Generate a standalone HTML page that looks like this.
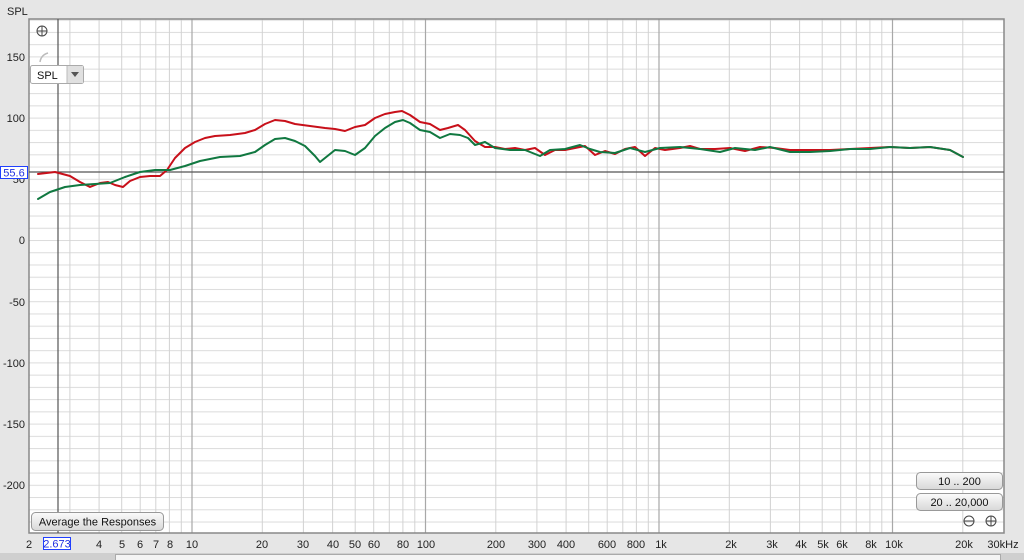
<!DOCTYPE html>
<html><head><meta charset="utf-8"><style>
html,body{margin:0;padding:0;width:1024px;height:560px;overflow:hidden;background:#e6e6e6;font-family:"Liberation Sans",sans-serif;}
svg{position:absolute;left:0;top:0}
</style></head><body>
<svg width="1024" height="560" xmlns="http://www.w3.org/2000/svg" font-family="Liberation Sans, sans-serif">
<defs>
<pattern id="hp" x="0" y="240" width="10" height="12.24" patternUnits="userSpaceOnUse">
<rect width="10" height="12.24" fill="#fff"/><rect y="0" width="10" height="1" fill="#dcdcdc"/>
</pattern>
<linearGradient id="bg" x1="0" y1="0" x2="0" y2="1"><stop offset="0" stop-color="#fbfbfb"/><stop offset="1" stop-color="#d8d8d8"/></linearGradient>
</defs>
<rect x="29" y="19" width="975" height="514" fill="url(#hp)"/>
<path d="M69.9 19V533M99.1 19V533M121.7 19V533M140.2 19V533M155.8 19V533M169.4 19V533M181.3 19V533M262.3 19V533M303.4 19V533M332.6 19V533M355.2 19V533M373.7 19V533M389.3 19V533M402.9 19V533M414.8 19V533M495.8 19V533M536.9 19V533M566.1 19V533M588.7 19V533M607.2 19V533M622.8 19V533M636.4 19V533M648.3 19V533M729.3 19V533M770.4 19V533M799.6 19V533M822.2 19V533M840.7 19V533M856.3 19V533M869.9 19V533M881.8 19V533M962.8 19V533" stroke="#d2d2d2" stroke-width="1"/>
<path d="M192 19V533M425.5 19V533M659 19V533M892.5 19V533" stroke="#a8a8a8" stroke-width="1.2"/>
<rect x="29" y="19" width="975" height="514" fill="none" stroke="#888" stroke-width="1.5"/>
<line x1="58" y1="19" x2="58" y2="533" stroke="#555" stroke-width="1.2"/>
<line x1="29" y1="172" x2="1004" y2="172" stroke="#555" stroke-width="1.2"/>
<g fill="none" stroke-width="2" stroke-linejoin="round" stroke-linecap="round">
<polyline stroke="#c8101a" points="38,174 55,172 70,176 80,182 90,187 100,183 108,182 115,185 123,187 130,181 140,177 150,176 160,176 167,170 175,158 185,148 195,142 205,138 215,136 230,135 245,133 255,130 265,124 275,120 285,121 295,124 310,126 325,128 335,129 345,131 355,127 365,125 375,118 385,114 395,112 402,111 410,115 420,122 430,124 440,130 448,128 458,125 465,130 475,141 485,147 495,147 505,149 515,148 525,150 535,148 545,155 555,150 565,150 575,148 585,146 595,155 605,151 615,154 625,149 635,147 645,156 655,148 665,150 680,148 690,146 700,149 715,149 730,148 745,151 760,147 775,148 790,150 810,150 830,150 850,149 870,148 890,147 910,148 930,147 950,150 963,157"/>
<polyline stroke="#107840" points="38,199 50,192 65,187 80,185 95,184 110,183 125,177 140,172 155,170 170,170 185,166 200,161 220,157 240,156 255,152 265,145 275,139 285,138 295,141 305,146 315,156 320,162 325,158 335,150 345,151 355,155 365,148 375,136 385,128 395,122 403,120 410,123 420,130 430,132 440,138 450,134 460,135 468,138 475,145 485,142 495,148 510,150 525,150 540,156 550,150 565,149 580,145 590,149 600,152 615,153 630,148 645,152 660,148 680,147 700,149 720,152 735,148 755,150 770,147 790,152 810,152 830,151 850,149 870,149 890,147 910,148 930,147 950,150 963,157"/>
</g>
<g font-size="11" fill="#222" text-anchor="end">
<text x="25" y="61">150</text><text x="25" y="122">100</text><text x="25" y="183">50</text><text x="25" y="244">0</text>
<text x="25" y="306">-50</text><text x="25" y="367">-100</text><text x="25" y="428">-150</text><text x="25" y="489">-200</text>
</g>
<text x="7" y="15" font-size="11" fill="#222">SPL</text>
<g font-size="11" fill="#222" text-anchor="middle">
<text x="29" y="548">2</text><text x="99" y="548">4</text><text x="122" y="548">5</text><text x="140" y="548">6</text><text x="156" y="548">7</text><text x="170" y="548">8</text><text x="192" y="548">10</text>
<text x="262" y="548">20</text><text x="303" y="548">30</text><text x="333" y="548">40</text><text x="355" y="548">50</text><text x="374" y="548">60</text><text x="403" y="548">80</text><text x="426" y="548">100</text>
<text x="496" y="548">200</text><text x="537" y="548">300</text><text x="566" y="548">400</text><text x="607" y="548">600</text><text x="636" y="548">800</text><text x="661" y="548">1k</text>
<text x="731" y="548">2k</text><text x="772" y="548">3k</text><text x="801" y="548">4k</text><text x="823" y="548">5k</text><text x="842" y="548">6k</text><text x="871" y="548">8k</text><text x="894" y="548">10k</text>
<text x="964" y="548">20k</text><text x="1003" y="548">30kHz</text>
</g>
<rect x="0.5" y="166.5" width="27" height="12" fill="#fff" stroke="#2040ff"/>
<text x="14" y="176.5" font-size="11" fill="#2030e0" text-anchor="middle">55.6</text>
<rect x="43.5" y="537.5" width="27" height="12" fill="#fff" stroke="#2040ff"/>
<text x="57" y="547.5" font-size="11" fill="#2030e0" text-anchor="middle">2.673</text>
<circle cx="42" cy="31" r="5" fill="none" stroke="#444" stroke-width="1"/><path d="M37 31H47M42 26V36" stroke="#444"/>
<path d="M40 62Q41 55 48 53" fill="none" stroke="#bbb" stroke-width="1.5"/>
<rect x="30.5" y="65.5" width="53" height="18" rx="2" fill="#fff" stroke="#aaa"/>
<rect x="67" y="66" width="16" height="17" fill="#e0e0e0"/><line x1="67" y1="66" x2="67" y2="83" stroke="#bbb"/>
<path d="M71 72L79 72L75 77Z" fill="#555"/>
<text x="37" y="79" font-size="11" fill="#111">SPL</text>
<rect x="31.5" y="512.5" width="132" height="18" rx="4" fill="url(#bg)" stroke="#999"/>
<text x="97.5" y="525.5" font-size="11" fill="#111" text-anchor="middle">Average the Responses</text>
<rect x="916.5" y="472.5" width="86" height="17" rx="4" fill="url(#bg)" stroke="#999"/>
<text x="959.5" y="485" font-size="11" fill="#111" text-anchor="middle">10 .. 200</text>
<rect x="916.5" y="493.5" width="86" height="17" rx="4" fill="url(#bg)" stroke="#999"/>
<text x="959.5" y="506" font-size="11" fill="#111" text-anchor="middle">20 .. 20,000</text>
<circle cx="969" cy="521" r="5" fill="none" stroke="#444"/><path d="M964 521H974" stroke="#444"/>
<circle cx="991" cy="521" r="5" fill="none" stroke="#444"/><path d="M986 521H996M991 516V526" stroke="#444"/>
<rect x="0" y="553" width="1024" height="7" fill="#cfcfcf"/>
<rect x="115.5" y="554.5" width="885" height="8" fill="#f4f4f4" stroke="#aaa"/>
</svg>
</body></html>
